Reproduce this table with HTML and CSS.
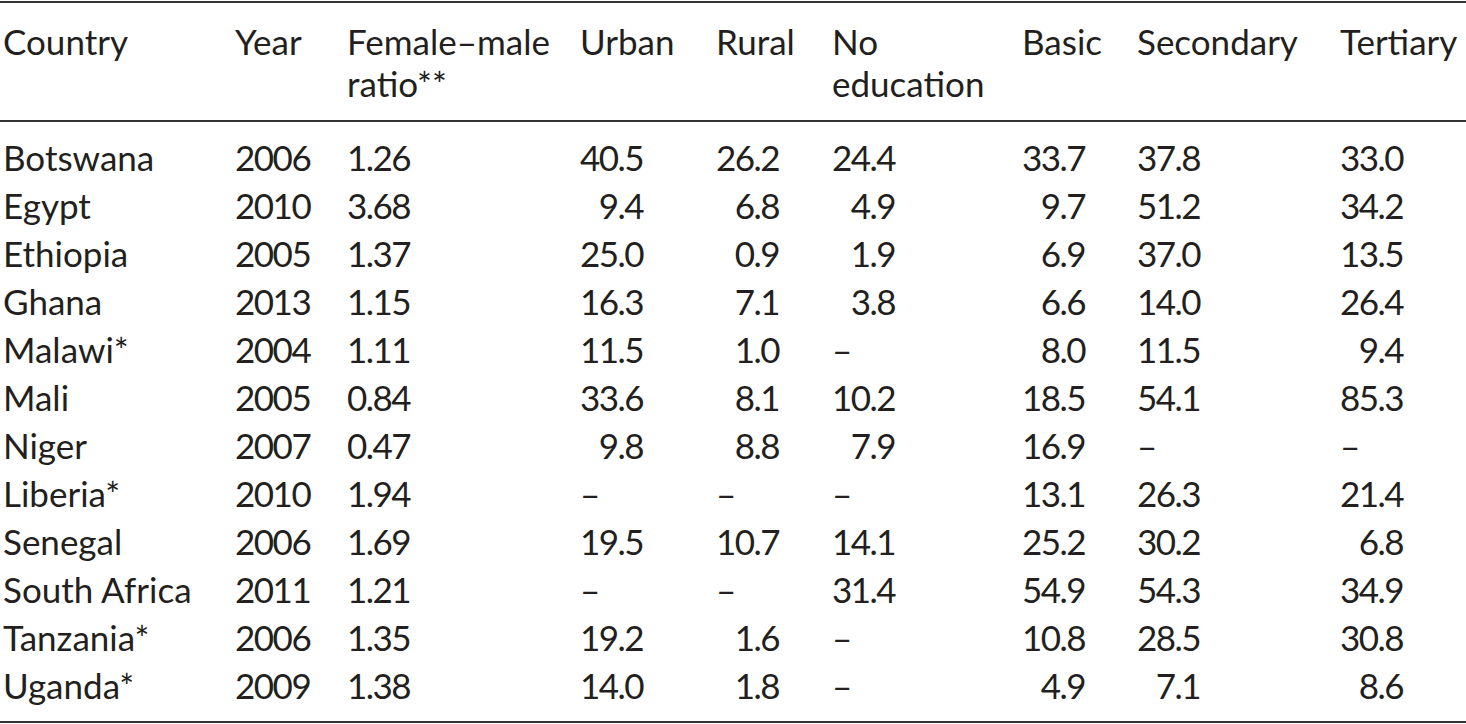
FILE: index.html
```html
<!DOCTYPE html>
<html lang="en">
<head>
<meta charset="utf-8">
<title>Table</title>
<link rel="stylesheet" href="styles.css">
</head>
<body>
<table class="data">
  <colgroup>
    <col class="c-country"><col class="c-year"><col class="c-ratio"><col class="c-urban"><col class="c-rural"><col class="c-noed"><col class="c-basic"><col class="c-sec"><col class="c-ter">
  </colgroup>
  <thead>
    <tr>
      <th>Country</th>
      <th>Year</th>
      <th>Female–male<br>ratio**</th>
      <th>Urban</th>
      <th>Rural</th>
      <th>No<br>education</th>
      <th>Basic</th>
      <th>Secondary</th>
      <th>Tertiary</th>
    </tr>
  </thead>
  <tbody>
    <tr><td>Botswana</td><td>2006</td><td>1.26</td><td>40.5</td><td>26.2</td><td>24.4</td><td>33.7</td><td>37.8</td><td>33.0</td></tr>
    <tr><td>Egypt</td><td>2010</td><td>3.68</td><td>&#8199;9.4</td><td>&#8199;6.8</td><td>&#8199;4.9</td><td>&#8199;9.7</td><td>51.2</td><td>34.2</td></tr>
    <tr><td>Ethiopia</td><td>2005</td><td>1.37</td><td>25.0</td><td>&#8199;0.9</td><td>&#8199;1.9</td><td>&#8199;6.9</td><td>37.0</td><td>13.5</td></tr>
    <tr><td>Ghana</td><td>2013</td><td>1.15</td><td>16.3</td><td>&#8199;7.1</td><td>&#8199;3.8</td><td>&#8199;6.6</td><td>14.0</td><td>26.4</td></tr>
    <tr><td>Malawi*</td><td>2004</td><td>1.11</td><td>11.5</td><td>&#8199;1.0</td><td>–</td><td>&#8199;8.0</td><td>11.5</td><td>&#8199;9.4</td></tr>
    <tr><td>Mali</td><td>2005</td><td>0.84</td><td>33.6</td><td>&#8199;8.1</td><td>10.2</td><td>18.5</td><td>54.1</td><td>85.3</td></tr>
    <tr><td>Niger</td><td>2007</td><td>0.47</td><td>&#8199;9.8</td><td>&#8199;8.8</td><td>&#8199;7.9</td><td>16.9</td><td>–</td><td>–</td></tr>
    <tr><td>Liberia*</td><td>2010</td><td>1.94</td><td>–</td><td>–</td><td>–</td><td>13.1</td><td>26.3</td><td>21.4</td></tr>
    <tr><td>Senegal</td><td>2006</td><td>1.69</td><td>19.5</td><td>10.7</td><td>14.1</td><td>25.2</td><td>30.2</td><td>&#8199;6.8</td></tr>
    <tr><td>South Africa</td><td>2011</td><td>1.21</td><td>–</td><td>–</td><td>31.4</td><td>54.9</td><td>54.3</td><td>34.9</td></tr>
    <tr><td>Tanzania*</td><td>2006</td><td>1.35</td><td>19.2</td><td>&#8199;1.6</td><td>–</td><td>10.8</td><td>28.5</td><td>30.8</td></tr>
    <tr><td>Uganda*</td><td>2009</td><td>1.38</td><td>14.0</td><td>&#8199;1.8</td><td>–</td><td>&#8199;4.9</td><td>&#8199;7.1</td><td>&#8199;8.6</td></tr>
  </tbody>
</table>
</body>
</html>
```
FILE: styles.css
```css
html, body {
  margin: 0;
  padding: 0;
  background: #ffffff;
}

body {
  color: #231f20;
  font-family: Lato, "Open Sans", "DejaVu Sans", sans-serif;
  font-size: 35px;
  font-variant-numeric: tabular-nums lining-nums;
}

.data {
  width: 1466px;
  margin-top: 1px;
  table-layout: fixed;
  border-collapse: separate;
  border-spacing: 0;
  border-top: 2px solid #333333;
}

.c-country { width: 232px; }
.c-year { width: 112px; }
.c-ratio { width: 233px; }
.c-urban { width: 136px; }
.c-rural { width: 116px; }
.c-noed { width: 190px; }
.c-basic { width: 115px; }
.c-sec { width: 203px; }
.c-ter { width: 129px; }

.data th {
  font-weight: normal;
  text-align: left;
  vertical-align: top;
  line-height: 42px;
  padding: 16.5px 0 16.5px 3px;
  border-bottom: 2px solid #333333;
  white-space: nowrap;
}

.data td {
  text-align: left;
  vertical-align: top;
  line-height: 48px;
  padding: 0 0 0 3px;
  white-space: nowrap;
}

.data td + td {
  letter-spacing: -1.5px;
}

.data tbody tr:first-child td {
  padding-top: 10.5px;
}

.data tbody tr:last-child td {
  padding-bottom: 12px;
  border-bottom: 2px solid #333333;
}
```
